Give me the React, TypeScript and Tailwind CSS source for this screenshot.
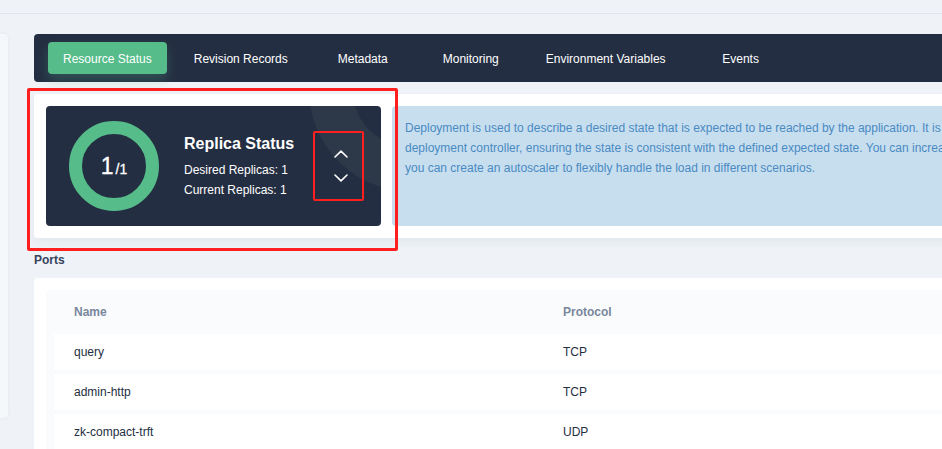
import React from "react";

const tabs = [
  "Resource Status",
  "Revision Records",
  "Metadata",
  "Monitoring",
  "Environment Variables",
  "Events",
];

const ports = [
  { name: "query", protocol: "TCP" },
  { name: "admin-http", protocol: "TCP" },
  { name: "zk-compact-trft", protocol: "UDP" },
];

function ChevronUp() {
  return (
    <svg width="14" height="8" viewBox="0 0 14 8" fill="none">
      <path d="M1 7L7 1.2L13 7" stroke="#ffffff" strokeWidth="1.6" strokeLinecap="round" strokeLinejoin="round" />
    </svg>
  );
}

function ChevronDown() {
  return (
    <svg width="14" height="8" viewBox="0 0 14 8" fill="none">
      <path d="M1 1L7 6.8L13 1" stroke="#ffffff" strokeWidth="1.6" strokeLinecap="round" strokeLinejoin="round" />
    </svg>
  );
}

export default function App() {
  return (
    <div
      className="relative w-[942px] h-[449px] overflow-hidden bg-[#eff3f7]"
      style={{ fontFamily: '"Liberation Sans", Arial, sans-serif' }}
    >
      <div className="h-[14px] border-b border-[#dfe4ea]" />
      <div className="flex items-start">
        <div className="mt-[20px] w-[8px] h-[384px] shrink-0 rounded-r-[4px] bg-[#f5f8fb] shadow-[0_0_4px_rgba(36,46,66,0.06)]" />
        <div className="ml-[26px] mt-[20px] w-[1100px] shrink-0">
          {/* Tabs */}
          <div className="flex h-[48px] items-center gap-3 rounded-l-[4px] bg-[#242e42] px-[14px]">
            {tabs.map((t, i) => (
              <div
                key={t}
                className={
                  i === 0
                    ? "flex h-[32px] min-w-[96px] items-center justify-center rounded-[4px] bg-[#55bc8a] px-[15px] pt-[2px] text-[12px] text-white shadow-[0_6px_12px_rgba(85,188,138,0.25)]"
                    : "flex h-[32px] min-w-[96px] items-center justify-center px-[15px] pt-[2px] text-[12px] text-white"
                }
              >
                {t}
              </div>
            ))}
          </div>

          {/* Status card */}
          <div className="mt-[12px] flex gap-[11px] rounded-l-[4px] bg-white p-[12px] shadow-[0_4px_8px_rgba(36,46,66,0.06)]">
            <div className="relative flex h-[120px] w-[335px] shrink-0 items-center overflow-hidden rounded-[4px] bg-[#242e42]">
              <div className="absolute left-[263px] top-[-117px] h-[202px] w-[202px] rounded-full border-[44px] border-[#2d3849]" />
              <div className="relative ml-[23px] flex h-[90px] w-[90px] shrink-0 items-center justify-center rounded-full border-[13px] border-[#55bc8a]">
                <span className="text-[23px] leading-none text-white [-webkit-text-stroke:0.3px_white]">1</span>
                <span className="ml-[2px] mt-[5px] text-[14px] leading-none text-white [-webkit-text-stroke:0.3px_white]">/1</span>
              </div>
              <div className="relative ml-[25px] flex flex-col text-white">
                <div className="text-[16px] font-bold leading-[22px]">Replica Status</div>
                <div className="mt-[5px] text-[12px] leading-[20px]">Desired Replicas: 1</div>
                <div className="text-[12px] leading-[20px]">Current Replicas: 1</div>
              </div>
              <div className="relative ml-auto mr-[26px] flex w-[28px] flex-col items-center gap-[16px]">
                <ChevronUp />
                <ChevronDown />
              </div>
              <div className="absolute left-[267px] top-[25px] h-[70px] w-[51px] rounded-[2px] border-2 border-[#ff1f1f]" />
            </div>
            <div className="h-[120px] flex-1 rounded-[4px] bg-[#c7deef] pl-[13px] pt-[12px] text-[12px] leading-[20px] text-[#4a8ac2]">
              <div className="whitespace-nowrap">
                Deployment is used to describe a desired state that is expected to be reached by the application. It is implemented by the
              </div>
              <div className="whitespace-nowrap">
                deployment controller, ensuring the state is consistent with the defined expected state. You can increase or decrease the number of replicas, or
              </div>
              <div className="whitespace-nowrap">
                you can create an autoscaler to flexibly handle the load in different scenarios.
              </div>
            </div>
          </div>

          {/* Ports */}
          <div className="mt-[14px] text-[12px] font-bold leading-[16px] text-[#36435c]">Ports</div>
          <div className="mt-[10px] rounded-l-[4px] bg-white p-[12px]">
            <div className="rounded-[4px] bg-[#f9fbfd] pb-[8px]">
              <div className="grid h-[44px] grid-cols-[489px_1fr] items-center pl-[28px] text-[12px] font-bold text-[#79879c]">
                <div>Name</div>
                <div>Protocol</div>
              </div>
              <div className="flex flex-col gap-[4px] px-[8px]">
                {ports.map((p) => (
                  <div
                    key={p.name}
                    className="grid h-[36px] grid-cols-[489px_1fr] items-center bg-white pl-[20px] text-[12px] text-[#242e42]"
                  >
                    <div>{p.name}</div>
                    <div>{p.protocol}</div>
                  </div>
                ))}
              </div>
            </div>
          </div>
        </div>
      </div>

      {/* Annotation */}
      <div className="pointer-events-none absolute left-[27px] top-[88px] h-[163px] w-[371px] rounded-[2px] border-[3px] border-[#ff1f1f]" />
    </div>
  );
}
